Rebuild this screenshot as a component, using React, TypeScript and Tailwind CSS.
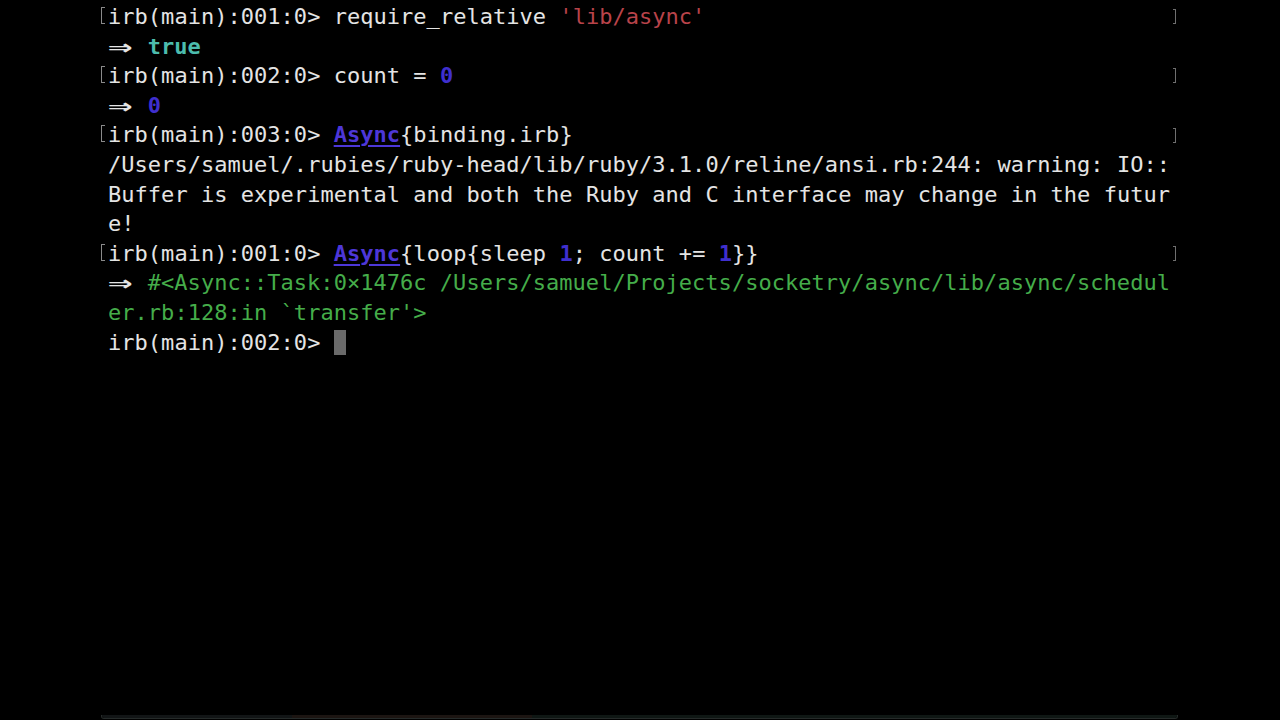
import React from "react";

const W = "text-[#e4e4e4]";
const RED = "text-[#b8434a]";
const TEAL = "text-[#4cbcad] font-bold";
const BLUE = "text-[#3f2fcf] font-bold";
const ASYNC = "text-[#4d37d8] font-bold underline underline-offset-[3px] decoration-2";
const GREEN = "text-[#45ad4a]";

function Arrow() {
  return (
    <span className="inline-block w-[26.5px] text-left">
      <span className="inline-block origin-left scale-x-[1.85] scale-y-[1.15] text-[#e4e4e4] font-bold">⇒</span>
    </span>
  );
}

function Row({
  mark,
  children,
}: {
  mark?: boolean;
  children: React.ReactNode;
}) {
  return (
    <div className="flex items-center h-[29.6px]">
      <div className="w-[108px] flex justify-end pr-[3px]">
        {mark && <div className="w-[4px] h-[17px] border-l border-t border-b border-[#8a8a8a] -mt-[3px]" />}
      </div>
      <div className="w-[1065px] whitespace-pre leading-[29.6px]">{children}</div>
      <div className="w-[6px]">
        {mark && <div className="w-[3px] h-[15px] border-r border-t border-b border-[#6f6f6f]" />}
      </div>
    </div>
  );
}

export default function App() {
  return (
    <div
      className="w-[1280px] h-[720px] bg-black relative overflow-hidden flex flex-col text-[22px] tracking-[0.03px]"
      style={{ fontFamily: '"DejaVu Sans Mono", "Liberation Mono", monospace' }}
    >
      <div className="pt-[2px] flex flex-col">
        <Row mark>
          <span className={W}>irb(main):001:0&gt; require_relative </span>
          <span className={RED}>'lib/async'</span>
        </Row>
        <Row>
          <Arrow />
          <span className={W}> </span>
          <span className={TEAL}>true</span>
        </Row>
        <Row mark>
          <span className={W}>irb(main):002:0&gt; count = </span>
          <span className={BLUE}>0</span>
        </Row>
        <Row>
          <Arrow />
          <span className={W}> </span>
          <span className={BLUE}>0</span>
        </Row>
        <Row mark>
          <span className={W}>irb(main):003:0&gt; </span>
          <span className={ASYNC}>Async</span>
          <span className={W}>{"{binding.irb}"}</span>
        </Row>
        <Row>
          <span className={W}>/Users/samuel/.rubies/ruby-head/lib/ruby/3.1.0/reline/ansi.rb:244: warning: IO::</span>
        </Row>
        <Row>
          <span className={W}>Buffer is experimental and both the Ruby and C interface may change in the futur</span>
        </Row>
        <Row>
          <span className={W}>e!</span>
        </Row>
        <Row mark>
          <span className={W}>irb(main):001:0&gt; </span>
          <span className={ASYNC}>Async</span>
          <span className={W}>{"{loop{sleep "}</span>
          <span className={BLUE}>1</span>
          <span className={W}>{"; count += "}</span>
          <span className={BLUE}>1</span>
          <span className={W}>{"}}"}</span>
        </Row>
        <Row>
          <Arrow />
          <span className={W}> </span>
          <span className={GREEN}>#&lt;Async::Task:0×1476c /Users/samuel/Projects/socketry/async/lib/async/schedul</span>
        </Row>
        <Row>
          <span className={GREEN}>er.rb:128:in `transfer'&gt;</span>
        </Row>
        <Row>
          <span className={W}>irb(main):002:0&gt; </span>
          <span className="inline-block align-middle w-[12px] h-[25px] bg-[#6a6a6a] -mt-[2px]" />
        </Row>
      </div>
      <div className="mt-auto mb-[1px] ml-[101px] w-[1077px] h-[4px] rounded-b-[3px] border-l border-r border-b border-[#262b2a] flex overflow-hidden">
        <div className="w-[190px] bg-[#121516]" />
        <div className="w-[240px] bg-[#1c1512]" />
        <div className="flex-1 bg-[#0f1714]" />
      </div>
    </div>
  );
}
